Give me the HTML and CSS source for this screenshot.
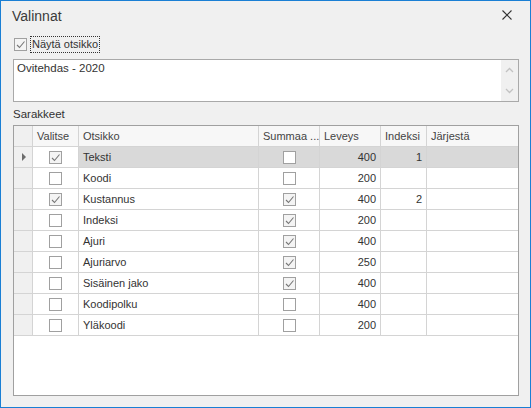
FILE: index.html
```html
<html>
  <head>
    <title>Valinnat</title>
    <link rel="stylesheet" href="styles.css">
  </head>
  <body>
    <div class="dialog">
      <div class="titlebar">
        <span class="title">Valinnat</span>
        <span class="close">
          <svg width="10" height="10" viewBox="0 0 10 10"><path d="M0.5 0.5 L9.5 9.5 M9.5 0.5 L0.5 9.5" stroke="#333" stroke-width="1.1" fill="none"/></svg>
        </span>
      </div>

      <div class="show-title">
        <span class="box checked">
          <svg width="11" height="11" viewBox="0 0 11 11"><path d="M2 6 L4.5 8.5 L9.5 2.5" stroke="#777" stroke-width="1.1" fill="none"/></svg>
        </span>
        <span class="focus">Näytä otsikko</span>
      </div>

      <div class="memo">
        <div class="memo-text">Ovitehdas - 2020</div>
        <div class="memo-scroll">
          <svg width="9" height="6" viewBox="0 0 9 6"><path d="M1 5 L4.5 1.5 L8 5" stroke="#c2c2c2" stroke-width="1.3" fill="none"/></svg>
          <svg width="9" height="6" viewBox="0 0 9 6"><path d="M1 1 L4.5 4.5 L8 1" stroke="#c2c2c2" stroke-width="1.3" fill="none"/></svg>
        </div>
      </div>

      <div class="section-label">Sarakkeet</div>

      <div class="grid">
        <div class="row head">
          <div class="cell ind"></div>
          <div class="cell">Valitse</div>
          <div class="cell">Otsikko</div>
          <div class="cell">Summaa ...</div>
          <div class="cell">Leveys</div>
          <div class="cell">Indeksi</div>
          <div class="cell last">Järjestä</div>
        </div>
        <div class="row selected">
          <div class="cell ind"><span class="arrow"></span></div>
          <div class="cell mid"><span class="box checked"><svg width="11" height="11" viewBox="0 0 11 11"><path d="M2 6 L4.5 8.5 L9.5 2.5" stroke="#777" stroke-width="1.1" fill="none"/></svg></span></div>
          <div class="cell">Teksti</div>
          <div class="cell mid"><span class="box"></span></div>
          <div class="cell num">400</div>
          <div class="cell num">1</div>
          <div class="cell last"></div>
        </div>
        <div class="row">
          <div class="cell ind"></div>
          <div class="cell mid"><span class="box"></span></div>
          <div class="cell">Koodi</div>
          <div class="cell mid"><span class="box"></span></div>
          <div class="cell num">200</div>
          <div class="cell num"></div>
          <div class="cell last"></div>
        </div>
        <div class="row">
          <div class="cell ind"></div>
          <div class="cell mid"><span class="box checked"><svg width="11" height="11" viewBox="0 0 11 11"><path d="M2 6 L4.5 8.5 L9.5 2.5" stroke="#777" stroke-width="1.1" fill="none"/></svg></span></div>
          <div class="cell">Kustannus</div>
          <div class="cell mid"><span class="box checked"><svg width="11" height="11" viewBox="0 0 11 11"><path d="M2 6 L4.5 8.5 L9.5 2.5" stroke="#777" stroke-width="1.1" fill="none"/></svg></span></div>
          <div class="cell num">400</div>
          <div class="cell num">2</div>
          <div class="cell last"></div>
        </div>
        <div class="row">
          <div class="cell ind"></div>
          <div class="cell mid"><span class="box"></span></div>
          <div class="cell">Indeksi</div>
          <div class="cell mid"><span class="box checked"><svg width="11" height="11" viewBox="0 0 11 11"><path d="M2 6 L4.5 8.5 L9.5 2.5" stroke="#777" stroke-width="1.1" fill="none"/></svg></span></div>
          <div class="cell num">200</div>
          <div class="cell num"></div>
          <div class="cell last"></div>
        </div>
        <div class="row">
          <div class="cell ind"></div>
          <div class="cell mid"><span class="box"></span></div>
          <div class="cell">Ajuri</div>
          <div class="cell mid"><span class="box checked"><svg width="11" height="11" viewBox="0 0 11 11"><path d="M2 6 L4.5 8.5 L9.5 2.5" stroke="#777" stroke-width="1.1" fill="none"/></svg></span></div>
          <div class="cell num">400</div>
          <div class="cell num"></div>
          <div class="cell last"></div>
        </div>
        <div class="row">
          <div class="cell ind"></div>
          <div class="cell mid"><span class="box"></span></div>
          <div class="cell">Ajuriarvo</div>
          <div class="cell mid"><span class="box checked"><svg width="11" height="11" viewBox="0 0 11 11"><path d="M2 6 L4.5 8.5 L9.5 2.5" stroke="#777" stroke-width="1.1" fill="none"/></svg></span></div>
          <div class="cell num">250</div>
          <div class="cell num"></div>
          <div class="cell last"></div>
        </div>
        <div class="row">
          <div class="cell ind"></div>
          <div class="cell mid"><span class="box"></span></div>
          <div class="cell">Sisäinen jako</div>
          <div class="cell mid"><span class="box checked"><svg width="11" height="11" viewBox="0 0 11 11"><path d="M2 6 L4.5 8.5 L9.5 2.5" stroke="#777" stroke-width="1.1" fill="none"/></svg></span></div>
          <div class="cell num">400</div>
          <div class="cell num"></div>
          <div class="cell last"></div>
        </div>
        <div class="row">
          <div class="cell ind"></div>
          <div class="cell mid"><span class="box"></span></div>
          <div class="cell">Koodipolku</div>
          <div class="cell mid"><span class="box"></span></div>
          <div class="cell num">400</div>
          <div class="cell num"></div>
          <div class="cell last"></div>
        </div>
        <div class="row">
          <div class="cell ind"></div>
          <div class="cell mid"><span class="box"></span></div>
          <div class="cell">Yläkoodi</div>
          <div class="cell mid"><span class="box"></span></div>
          <div class="cell num">200</div>
          <div class="cell num"></div>
          <div class="cell last"></div>
        </div>
      </div>
    </div>
  </body>
</html>
```

FILE: styles.css
```css
* {
  margin: 0;
  padding: 0;
  box-sizing: border-box;
}

body {
  background: #f0f0f0;
  font-family: "Liberation Sans", Arial, sans-serif;
  font-size: 11px;
  color: #333;
}

.dialog {
  width: 531px;
  height: 408px;
  border: 1px solid #1a7fd4;
  background: #f0f0f0;
  padding: 0 12px;
}

.titlebar {
  display: flex;
  justify-content: space-between;
  align-items: flex-start;
  height: 33px;
}

.title {
  font-size: 14px;
  color: #3a3a3a;
  padding-top: 7px;
  margin-left: -1px;
}

.close {
  margin-top: 9px;
  margin-right: 6px;
  line-height: 0;
}

.show-title {
  display: flex;
  align-items: center;
  height: 20px;
  padding-left: 1px;
}

.show-title .box {
  margin-right: 3px;
}

.focus {
  border: 1px dotted #333;
  padding: 1px 1px 2px 1px;
  line-height: 12px;
}

.box {
  display: inline-flex;
  align-items: center;
  justify-content: center;
  width: 13px;
  height: 13px;
  border: 1px solid #a0a0a0;
  background: #fff;
  line-height: 0;
}

.box.checked {
  background: #f4f4f4;
}

.memo {
  display: flex;
  height: 43px;
  margin-top: 5px;
  margin-right: -1px;
  border: 1px solid #a9a9a9;
  background: #fff;
}

.memo-text {
  flex: 1;
  padding: 2px 3px;
  font-size: 11.5px;
}

.memo-scroll {
  width: 17px;
  background: #f0f0f0;
  display: flex;
  flex-direction: column;
  justify-content: space-between;
  align-items: center;
  padding: 7px 0 7px 0;
}

.section-label {
  margin-top: 6px;
  height: 17px;
  font-size: 11.5px;
}

.grid {
  height: 271px;
  margin-right: -1px;
  border: 1px solid #a0a0a0;
  background: #fff;
}

.row {
  display: grid;
  grid-template-columns: 19px 46px 180px 61px 61px 46px 1fr;
  height: 21px;
}

.cell {
  border-right: 1px solid #d4d4d4;
  border-bottom: 1px solid #d4d4d4;
  padding: 0 4px;
  line-height: 20px;
  white-space: nowrap;
  overflow: hidden;
}

.cell.last {
  border-right: none;
}

.cell.ind {
  background: #f0f0f0;
  padding: 0;
  display: flex;
  align-items: center;
  justify-content: center;
}

.head .cell {
  background: #f7f7f7;
  color: #444;
}

.head .cell.ind {
  background: #f0f0f0;
}

.cell.mid {
  display: flex;
  align-items: center;
  justify-content: center;
  padding: 0;
}

.cell.num {
  text-align: right;
  padding-right: 4px;
}

.selected .cell {
  background: #d9d9d9;
}

.selected .cell.mid:nth-child(2) {
  background: #fff;
}

.selected .cell.ind {
  background: #f0f0f0;
}

.arrow {
  width: 0;
  height: 0;
  border-top: 4px solid transparent;
  border-bottom: 4px solid transparent;
  border-left: 4px solid #6d6d6d;
  margin-left: 2px;
}
```
